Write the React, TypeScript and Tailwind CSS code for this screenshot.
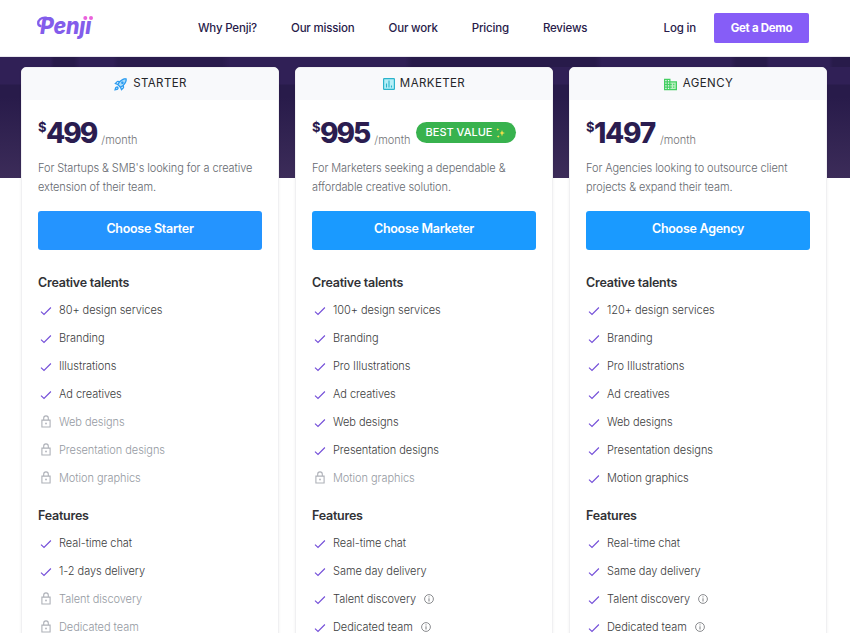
import React from "react";
import { MdOutlineRocketLaunch } from "react-icons/md";

type Item = { label: string; locked?: boolean; info?: boolean };
type Plan = {
  name: string;
  icon: React.ReactNode;
  price: string;
  priceSpacing: string;
  best?: boolean;
  lines: [string, string];
  cta: string;
  button: string;
  talents: Item[];
  features: Item[];
};

function RocketIcon() {
  return (
    <span className="relative block size-[15px]">
      <svg viewBox="0 0 24 24" className="absolute inset-0 size-[15px]">
        <path d="M7 11C12 4 17 2 22 2c0 6-3 11-9 15zM3 21l1-5 3-1 2 2-1 3z" fill="#a9dbfa" />
      </svg>
      <MdOutlineRocketLaunch className="absolute inset-0 size-[15px] text-[#2d9cf0]" />
    </span>
  );
}

function ChartIcon() {
  return (
    <svg viewBox="0 0 12 12" className="block size-3">
      <rect x="0.6" y="0.6" width="10.8" height="10.8" rx="0.6" fill="#b5eff7" stroke="#2bb3cb" strokeWidth="1.2" />
      <path d="M3.5 9.5v-4M6 9.5v-7M8.5 9.5V7.4" stroke="#2bb3cb" strokeWidth="1.1" />
    </svg>
  );
}

function BuildingIcon() {
  return (
    <svg viewBox="1 2 22 20" className="block h-[13px] w-[15px]">
      <path d="M12 8h9v12h-9z" fill="#bdf0c4" />
      <path
        d="M12 7V3H2v18h20V7H12zM6 19H4v-2h2v2zm0-4H4v-2h2v2zm0-4H4V9h2v2zm0-4H4V5h2v2zm4 12H8v-2h2v2zm0-4H8v-2h2v2zm0-4H8V9h2v2zm0-4H8V5h2v2zm10 12h-8v-2h2v-2h-2v-2h2v-2h-2V9h8v10zm-2-8h-2v2h2v-2zm0 4h-2v2h2v-2z"
        fill="#43cf61"
      />
    </svg>
  );
}

function Check() {
  return (
    <svg viewBox="0 0 12 10" className="mt-[2px] block h-2.5 w-3">
      <path d="M1 5.7 4 8.5 10.9 1.5" fill="none" stroke="#7550d9" strokeWidth="1.15" />
    </svg>
  );
}

function Lock() {
  return (
    <svg viewBox="0 0 10 13" className="mb-px block h-[13px] w-2.5">
      <path d="M.9 5.1h8.2v6.9H.9zM2.7 5V3.2a2.3 2.3 0 0 1 4.6 0V5" fill="none" stroke="#aeb1b8" strokeWidth="1.1" />
      <rect x="4.2" y="7.7" width="1.6" height="1.6" fill="#aeb1b8" />
    </svg>
  );
}

function Info() {
  return (
    <svg viewBox="0 0 10 10" className="ml-2 block size-2.5">
      <circle cx="5" cy="5" r="4.4" fill="none" stroke="#7d7f82" strokeWidth="0.9" />
      <path d="M5 4.3v3.2M5 2.4v1" stroke="#7d7f82" strokeWidth="1" />
    </svg>
  );
}

function Logo() {
  return (
    <svg viewBox="35 0 70 56" className="block h-14 w-[70px]">
      <text
        x="40"
        y="34"
        textLength="51"
        lengthAdjust="spacingAndGlyphs"
        fill="#835deb"
        className="font-['Inter',sans-serif] text-[23.5px] font-extrabold italic"
      >
        Penȷı
      </text>
      <path d="M46 17.7C41 17.2 38.1 20 38.2 23.3C38.3 24.8 39 25.700 40.5 26" fill="none" stroke="#835deb" strokeWidth="2.3" strokeLinecap="round" />
      <circle cx="85.3" cy="18" r="2" fill="#ea62dc" />
      <circle cx="91" cy="18" r="2" fill="#ea62dc" />
    </svg>
  );
}

const base = (locked: string[], names: string[]): Item[] =>
  names.map((label) => ({ label, locked: locked.includes(label) }));

const plans: Plan[] = [
  {
    name: "STARTER",
    icon: <RocketIcon />,
    price: "499",
    priceSpacing: "tracking-[-2px]",
    lines: ["For Startups & SMB's looking for a creative", "extension of their team."],
    cta: "Choose Starter",
    button: "bg-[#2494ff]",
    talents: base(
      ["Web designs", "Presentation designs", "Motion graphics"],
      ["80+ design services", "Branding", "Illustrations", "Ad creatives", "Web designs", "Presentation designs", "Motion graphics"],
    ),
    features: base(
      ["Talent discovery", "Dedicated team"],
      ["Real-time chat", "1-2 days delivery", "Talent discovery", "Dedicated team"],
    ),
  },
  {
    name: "MARKETER",
    icon: <ChartIcon />,
    price: "995",
    priceSpacing: "tracking-[-2px]",
    best: true,
    lines: ["For Marketers seeking a dependable &", "affordable creative solution."],
    cta: "Choose Marketer",
    button: "bg-[#1a9aff]",
    talents: base(
      ["Motion graphics"],
      ["100+ design services", "Branding", "Pro Illustrations", "Ad creatives", "Web designs", "Presentation designs", "Motion graphics"],
    ),
    features: [
      { label: "Real-time chat" },
      { label: "Same day delivery" },
      { label: "Talent discovery", info: true },
      { label: "Dedicated team", info: true },
    ],
  },
  {
    name: "AGENCY",
    icon: <BuildingIcon />,
    price: "1497",
    priceSpacing: "tracking-[-1.3px]",
    lines: ["For Agencies looking to outsource client", "projects & expand their team."],
    cta: "Choose Agency",
    button: "bg-[#1a9aff]",
    talents: base(
      [],
      ["120+ design services", "Branding", "Pro Illustrations", "Ad creatives", "Web designs", "Presentation designs", "Motion graphics"],
    ),
    features: [
      { label: "Real-time chat" },
      { label: "Same day delivery" },
      { label: "Talent discovery", info: true },
      { label: "Dedicated team", info: true },
    ],
  },
];

function Section({ title, items }: { title: string; items: Item[] }) {
  return (
    <section>
      <h3 className="h-[27px] text-[12.5px] leading-[28px] font-semibold tracking-[-0.24px] text-[#313236]">{title}</h3>
      <ul>
        {items.map((item) => (
          <li key={item.label} className="flex h-7 items-center">
            <span className="flex w-[21px] shrink-0 justify-center pr-[5px]">{item.locked ? <Lock /> : <Check />}</span>
            <span className={item.locked ? "pt-px text-[11px] font-light tracking-[-0.05px] text-[#959aa2]" : "pt-px text-[11px] font-light tracking-[-0.05px] text-[#3c3d40]"}>
              {item.label}
            </span>
            {item.info && <Info />}
          </li>
        ))}
      </ul>
    </section>
  );
}

function PlanCard({ plan }: { plan: Plan }) {
  return (
    <article className="h-[600px] w-[258px] shrink-0 overflow-hidden rounded-[5px] border border-[#f0f0f2] bg-white shadow-[0_0_3px_rgba(0,0,0,0.06)]">
      <div className="flex h-8 items-center justify-center gap-[5px] bg-[#f8f9fb]">
        {plan.icon}
        <h2 className="pb-px text-[11.5px] leading-[15px] tracking-[0.4px] text-[#242529]">{plan.name}</h2>
      </div>
      <div className="px-4">
        <div className="flex h-[59px] items-start pt-[17px] text-[#2b1d50]">
          <span className="mt-[2px] w-[8px] text-[13px] leading-[16px] font-bold">$</span>
          <span className={`text-[28px] leading-[33px] font-extrabold ${plan.priceSpacing}`}>{plan.price}</span>
          <span className="ml-[5px] pt-[15px] text-[11px] leading-[16px] font-light text-[#737477]">/month</span>
          {plan.best && (
            <span className="ml-[5px] mt-[5px] flex h-[21px] w-[100px] items-center justify-center gap-1 rounded-full bg-[#38b24e] text-[11px] font-medium text-white">
              BEST VALUE
              <svg viewBox="0 0 9 10" className="block h-2.5 w-[9px]">
                <path d="M6 2l.8 2.2L9 5l-2.2.8L6 8.4l-.8-2.6L3.500 5l1.7-.8zM1.8 0l.4 1.100 1.100.4-1.100.4L1.8 3l-.4-1.100L.3 1.500l1.100-.4zM2.2 7l.4 1.100 1.100.4-1.100.4-.4 1.100-.4-1.100-1.100-.4 1.100-.4z" fill="#f9e14a" />
              </svg>
            </span>
          )}
        </div>
        <p className="text-[11px] leading-[19px] font-light tracking-[-0.09px] whitespace-nowrap text-[#65696f]">
          {plan.lines[0]}
          <br />
          {plan.lines[1]}
        </p>
        <button className={`mt-[14px] mb-[19px] flex h-[39px] w-full items-center justify-center rounded-[3px] pb-[2px] text-[12.5px] font-semibold tracking-[-0.28px] text-white ${plan.button}`}>
          {plan.cta}
        </button>
        <Section title="Creative talents" items={plan.talents} />
        <div className="h-2.5" />
        <Section title="Features" items={plan.features} />
      </div>
    </article>
  );
}

export default function App() {
  return (
    <div className="h-[633px] w-[850px] overflow-hidden bg-white font-['Inter',sans-serif]">
      <header className="flex h-[57px] items-center border-b border-[#e9e8ee] bg-white pr-[41px] pl-[35px] text-[11.5px] font-medium tracking-[-0.18px] text-[#281b4a]">
        <Logo />
        <nav className="ml-[93px] flex gap-[34px] pt-px whitespace-nowrap">
          <a>Why Penji?</a>
          <a>Our mission</a>
          <a>Our work</a>
          <a>Pricing</a>
          <a>Reviews</a>
        </nav>
        <a className="ml-auto pt-px">Log in</a>
        <button className="ml-[18px] h-[30px] w-[95px] rounded-[2px] bg-[#865df7] pt-px font-bold tracking-[-0.3px] text-white">Get a Demo</button>
      </header>
      <main className="h-[576px] bg-[linear-gradient(to_right,#302056_50px,#281b4a_54px,#281b4a_74px,#302056_80px,#302056_113px,#2a1c4d_118px,#2a1c4d_222px,#302056_230px,#302056_405px,#281b4a_412px,#281b4a_595px,#302056_602px,#302056_730px,#281b4a_736px,#281b4a_766px,#302056_769px,#302056_829px,#281b4a_833px),linear-gradient(to_bottom,#302056_0,#302056_27px,#281b4a_28px,#281b4a_40px,#3c2c59_121px,#ffffff_121px)] bg-[size:850px_10px,850px_576px] bg-no-repeat pt-2.5 pl-[21px]">
        <div className="flex gap-4">
          {plans.map((plan) => (
            <PlanCard key={plan.name} plan={plan} />
          ))}
        </div>
      </main>
    </div>
  );
}
